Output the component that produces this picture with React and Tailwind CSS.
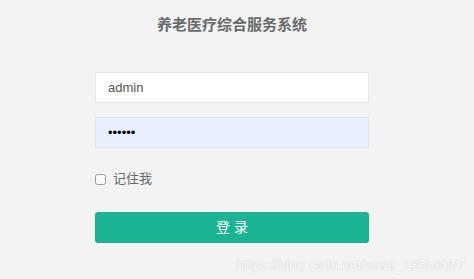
import React, { useState } from 'react';

const App = () => {
  const [username, setUsername] = useState('admin');
  const [password, setPassword] = useState('123456');
  const [remember, setRemember] = useState(false);

  return (
    <div
      className="relative w-[474px] h-[279px] overflow-hidden bg-[#f3f3f4]"
      style={{ fontFamily: '"Liberation Sans", "Noto Sans CJK SC", sans-serif' }}
    >
      <div className="flex flex-col pl-[95px] w-[369px]">
        {/* Title */}
        <h3 className="mt-[15px] h-[20px] leading-[20px] text-center text-[15px] font-bold text-[#676a6c]">
          养老医疗综合服务系统
        </h3>

        {/* Login form */}
        <form className="flex flex-col mt-[37px]" onSubmit={(e) => e.preventDefault()}>
          <input
            type="text"
            value={username}
            onChange={(e) => setUsername(e.target.value)}
            className="h-[31px] px-[12px] bg-white border border-[#e5e6e7] text-[13px] text-[#555] outline-none"
          />
          <input
            type="password"
            value={password}
            onChange={(e) => setPassword(e.target.value)}
            className="mt-[14px] h-[31px] px-[12px] bg-[#e8f0fe] border border-[#e1e6ee] text-[13px] text-black outline-none"
          />

          <label className="flex items-center mt-[23px] h-[16px] text-[13px] text-[#676a6c]">
            <input
              type="checkbox"
              checked={remember}
              onChange={(e) => setRemember(e.target.checked)}
              className="w-[11px] h-[11px] m-0 opacity-70 accent-[#1ab394]"
            />
            <span className="ml-[7px]">记住我</span>
          </label>

          <button
            type="submit"
            className="mt-[25px] h-[31px] rounded-[3px] bg-[#1ab394] text-white text-[14px]"
          >
            登 录
          </button>
        </form>
      </div>

      {/* watermark */}
      <div className="absolute right-[9px] top-[255px] text-[14px] text-white/90 [text-shadow:0_0_1px_rgba(0,0,0,0.25)]">
        https://blog.csdn.net/sinat_18558057
      </div>
    </div>
  );
};

export default App;
